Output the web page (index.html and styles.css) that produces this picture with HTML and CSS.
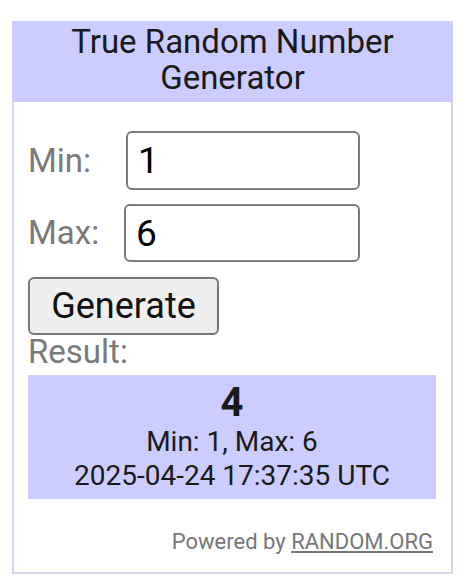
FILE: index.html
```html
<!DOCTYPE html>
<html>
<head>
<meta charset="utf-8">
<link rel="stylesheet" href="styles.css">
</head>
<body>
<div class="widget">
  <div class="header">True Random Number<br>Generator</div>
  <div class="content">
    <div class="form">
      <span class="label">Min:</span><span class="field">1</span>
      <span class="label">Max:</span><span class="field field-max">6</span>
    </div>
    <button class="btn">Generate</button>
    <div class="label result-label">Result:</div>
    <div class="result">
      <div class="num">4</div>
      <div class="line">Min: 1, Max: 6</div>
      <div class="line">2025-04-24 17:37:35 UTC</div>
    </div>
    <div class="powered">Powered by <a href="#">RANDOM.ORG</a></div>
  </div>
</div>
</body>
</html>
```
FILE: styles.css
```css
html, body { margin: 0; padding: 0; background: #fff; }
body { font-family: Roboto, "Liberation Sans", sans-serif; }
.widget {
  margin: 21px 0 0 12px;
  width: 437px;
  border: 2px solid #d6d6f0;
  border-top: none;
}
.header {
  background: #ccccff;
  text-align: center;
  font-size: 33px;
  line-height: 36px;
  color: #1a1a1a;
  padding: 3px 0 6px;
  margin: 0 -2px;
}
.content { padding: 29px 16px 17px 14px; }
.form {
  display: grid;
  grid-template-columns: 98px 234px;
  row-gap: 14px;
  align-items: center;
}
.label { font-size: 33px; line-height: 34px; color: #7a7a7a; }
.field {
  box-sizing: border-box;
  height: 59px;
  border: 2px solid #7c7c7c;
  border-radius: 6px;
  font-size: 37px;
  line-height: 55px;
  padding-left: 10px;
  color: #000;
}
.field-max { margin-left: -2px; height: 58px; }
.btn {
  display: block;
  margin-top: 15px;
  width: 191px;
  height: 58px;
  background: #efefef;
  border: 2px solid #777;
  border-radius: 6px;
  font-family: Roboto, "Liberation Sans", sans-serif;
  font-size: 36px;
  color: #111;
  padding: 0;
}
.result-label { margin-top: 0; }
.result {
  margin-top: 6px;
  width: 408px;
  background: #ccccff;
  text-align: center;
  padding: 6px 0 6px;
  color: #1a1a1a;
}
.num { font-size: 40px; font-weight: bold; line-height: 44px; }
.line { font-size: 28px; line-height: 34px; }
.powered {
  margin-top: 30px;
  text-align: right;
  font-size: 22px;
  line-height: 26px;
  color: #777;
  padding-right: 2px;
}
.powered a { color: #777; }
```
